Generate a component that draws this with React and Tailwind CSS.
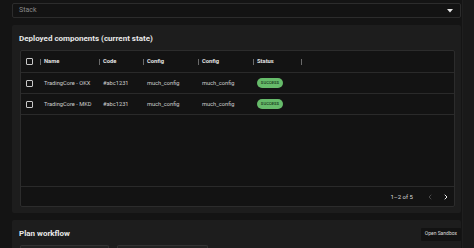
import { ChevronLeft, ChevronRight } from "lucide-react";

const rows = [
  { name: "TradingCore - OKX", code: "#abc1231", c1: "much_config", c2: "much_config", status: "success" },
  { name: "TradingCore - MKD", code: "#abc1231", c1: "much_config", c2: "much_config", status: "success" },
];

const cols = "grid grid-cols-[19px_59px_44px_55px_55px_48px_1fr]";

function Sep() {
  return <span className="w-px h-[6px] bg-[#6a6a6a] mr-[3px]" />;
}

function Check() {
  return <span className="block w-[7px] h-[7px] border border-[#c8c8c8] rounded-[1px]" />;
}

export default function App() {
  return (
    <div className="w-[474px] h-[248px] bg-[#141414] overflow-hidden flex font-['Roboto',sans-serif] text-[#d6d6d6]">
      <div className="w-[462px] pl-3 pr-px flex flex-col">
        {/* stack select */}
        <div className="shrink-0 mt-[3px] h-[15px] border border-[#2c2c2c] rounded-[2px] bg-[#131313] flex items-center justify-between px-[6px]">
          <span className="text-[7px] text-[#8a8a8a]">Stack</span>
          <svg width="6" height="4" viewBox="0 0 6 4" className="mr-[1px]">
            <path d="M0 0h6L3 3.5z" fill="#e6e6e6" />
          </svg>
        </div>

        {/* deployed components */}
        <div className="shrink-0 mt-[7px] h-[188px] bg-[#1d1d1d] rounded-[2px] pl-[8px] pr-[6px] pt-[8px] pb-[6px] flex flex-col">
          <h2 className="h-[12px] leading-[12px] text-[8px] font-bold text-[#e8e8e8] -ml-px">
            Deployed components (current state)
          </h2>
          <div className="mt-[5px] flex-1 border border-[#2c2c2c] rounded-[2px] bg-[#131313] flex flex-col">
            <div className={`${cols} h-[22px] shrink-0 items-center border-b border-[#2a2a2a] text-[5.8px] font-bold text-[#e4e4e4]`}>
              <div className="pl-[5px]"><Check /></div>
              <div className="flex items-center"><Sep />Name</div>
              <div className="flex items-center"><Sep />Code</div>
              <div className="flex items-center"><Sep />Config</div>
              <div className="flex items-center"><Sep />Config</div>
              <div className="flex items-center"><Sep />Status</div>
              <div className="flex items-center"><Sep /></div>
            </div>
            {rows.map((r, i) => (
              <div key={i} className={`${cols} h-[21px] shrink-0 items-center border-b border-[#2a2a2a] text-[5.7px] text-[#cfcfcf]`}>
                <div className="pl-[5px]"><Check /></div>
                <div className="pl-[4px]">{r.name}</div>
                <div className="pl-[4px]">{r.code}</div>
                <div className="pl-[4px]">{r.c1}</div>
                <div className="pl-[4px]">{r.c2}</div>
                <div className="pl-[4px]">
                  <span className="inline-flex items-center justify-center w-[26px] h-[10px] rounded-full bg-[#66bb6a] text-[5px] text-[#16351a]">
                    {r.status}
                  </span>
                </div>
                <div />
              </div>
            ))}
            <div className="flex-1" />
            <div className="h-[20px] shrink-0 border-t border-[#2a2a2a] flex items-center justify-end pr-[4px] text-[6px] text-[#d8d8d8]">
              <span className="mr-[13px]">1–2 of 5</span>
              <ChevronLeft size={8} strokeWidth={3} className="text-[#4a4a4a] mr-[8px]" />
              <ChevronRight size={8} strokeWidth={3} className="text-[#eeeeee]" />
            </div>
          </div>
        </div>

        {/* plan workflow */}
        <div className="shrink-0 mt-[7px] h-[40px] bg-[#1d1d1d] rounded-t-[2px] pl-[7px] pt-[7px] flex flex-col">
          <div className="flex items-center justify-between h-[14px]">
            <h2 className="text-[8px] font-bold text-[#e8e8e8]">Plan workflow</h2>
            <button className="h-[13px] px-[4px] bg-[#121212] text-[5px] text-[#dcdcdc] rounded-[1px]">
              Open Sandbox
            </button>
          </div>
          <div className="mt-[4px] flex gap-[8px] pl-px">
            <div className="w-[89px] h-[10px] border-t border-x border-[#333] bg-[#222] rounded-t-[2px]" />
            <div className="w-[91px] h-[10px] border-t border-x border-[#333] bg-[#222] rounded-t-[2px]" />
          </div>
        </div>
      </div>
      <div className="flex-1 bg-[#191919] border-l border-[#1f1f1f]" />
    </div>
  );
}
